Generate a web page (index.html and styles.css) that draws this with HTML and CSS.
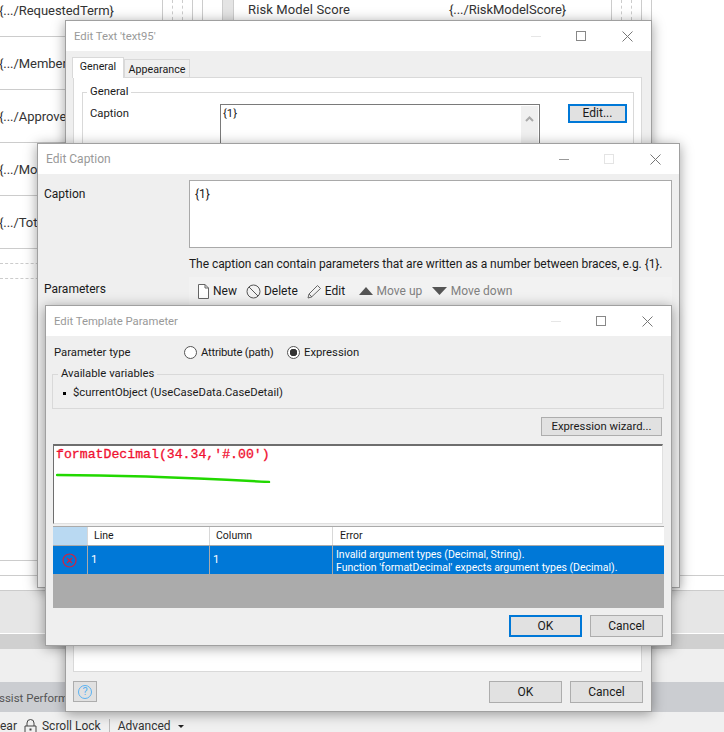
FILE: index.html
```html
<!DOCTYPE html>
<html lang="en">
<head>
<meta charset="utf-8">
<title>Edit Template Parameter</title>
<link rel="stylesheet" href="styles.css">
</head>
<body>
<div class="desktop">
  <div class="backdrop">
    <div class="doc-row">
      <span class="cell-a">{.../RequestedTerm}</span>
      <div class="ticks"><i></i><i class="dash"></i><i class="dash"></i><i></i><i></i><b></b></div>
      <span class="cell-b">Risk Model Score</span>
      <span class="cell-c">{.../RiskModelScore}</span>
      <div class="ticks right"><i></i><i class="dash"></i><i class="dash"></i><i></i><i></i></div>
    </div>
    <div class="doc-row"><span class="cell-a">{.../Member</span></div>
    <div class="doc-row"><span class="cell-a">{.../Approve</span></div>
    <div class="doc-row"><span class="cell-a">{.../Mo</span></div>
    <div class="doc-row"><span class="cell-a">{.../Tota</span></div>
    <div class="dash-row"></div>
    <div class="dash-row"></div>
    <div class="doc-spacer"></div>
    <div class="thin-row"></div>
    <div class="thin-gap"></div>
    <div class="pane-grey"></div>
    <div class="pane-band"></div>
    <div class="pane-white"></div>
    <div class="tab-band">ssist Perform</div>
    <div class="status">
      <span>ear</span>
      <svg class="lock" width="13" height="15" viewBox="0 0 13 15"><path d="M3 7V4a3.500 3.500 0 0 1 7 0v3M1 7h11v7.500H1z" fill="none" stroke="#444"/><rect x="5.500" y="9.500" width="2" height="2" fill="#444"/></svg>
      <span>Scroll Lock</span>
      <span class="status-sep"></span>
      <span>Advanced</span>
      <span class="caret"></span>
    </div>
  </div>

  <section class="window win-text">
    <header class="titlebar">
      <span class="title">Edit Text 'text95'</span>
      <div class="controls">
        <span class="ctl-min faint"></span><span class="ctl-max"></span>
        <svg class="ctl-x" width="11" height="11" viewBox="0 0 11 11"><path d="M.5.5l10 10M10.500.5l-10 10" stroke="#777" fill="none"/></svg>
      </div>
    </header>
    <div class="tabs">
      <span class="tab active">General</span>
      <span class="tab">Appearance</span>
    </div>
    <div class="tab-panel">
      <fieldset class="group general-group">
        <legend>General</legend>
        <div class="caption-row">
          <span class="caption-label">Caption</span>
          <div class="caption-box"><span>{1}</span><div class="scroll"><svg width="9" height="6" viewBox="0 0 9 6"><path d="M1 5l3.500-3.500L8 5" fill="none" stroke="#aaa" stroke-width="2"/></svg></div></div>
          <button class="btn focus edit-btn">Edit...</button>
        </div>
      </fieldset>
      <div class="panel-white"></div>
    </div>
    <footer class="win-text-foot">
      <span class="help"><span class="help-q">?</span></span>
      <span class="grow"></span>
      <button class="btn foot-btn">OK</button>
      <button class="btn foot-btn">Cancel</button>
    </footer>
  </section>

  <section class="window win-caption">
    <header class="titlebar">
      <span class="title">Edit Caption</span>
      <div class="controls">
        <span class="ctl-min dark"></span><span class="ctl-max faint"></span>
        <svg class="ctl-x" width="11" height="11" viewBox="0 0 11 11"><path d="M.5.5l10 10M10.500.5l-10 10" stroke="#777" fill="none"/></svg>
      </div>
    </header>
    <div class="caption-form">
      <div class="form-row">
        <span class="form-label">Caption</span>
        <div class="form-main">
          <div class="caption-area">{1}</div>
          <p class="hint">The caption can contain parameters that are written as a number between braces, e.g. {1}.</p>
        </div>
      </div>
      <div class="form-row params">
        <span class="form-label">Parameters</span>
        <div class="toolbar">
          <span class="tool"><svg width="13" height="15" viewBox="0 0 13 15"><path d="M1.500.5h6.500l3.500 3.500v10.500h-10zM8 .5v3.500h3.500" fill="#fff" stroke="#666"/></svg>New</span>
          <span class="tool"><svg width="15" height="15" viewBox="0 0 15 15"><circle cx="7.500" cy="7.500" r="6.500" fill="none" stroke="#555"/><path d="M3 3l9 9" stroke="#555"/></svg>Delete</span>
          <span class="tool tool-last"><svg width="15" height="15" viewBox="0 0 15 15"><path d="M1 14l1-4 8.500-8.500 3 3L4.500 13zM2 10l3 3" fill="none" stroke="#666"/></svg>Edit</span>
          <span class="tool off"><svg width="14" height="8" viewBox="0 0 14 8"><path d="M7 0l7 8H0z" fill="#555"/></svg>Move up</span>
          <span class="tool off"><svg width="15" height="8" viewBox="0 0 15 8"><path d="M0 0h15l-7.500 8z" fill="#555"/></svg>Move down</span>
        </div>
      </div>
    </div>
    <footer class="caption-foot"><span class="hidden-btn"></span></footer>
  </section>

  <section class="window win-param">
    <header class="titlebar">
      <span class="title">Edit Template Parameter</span>
      <div class="controls">
        <span class="ctl-min faint"></span><span class="ctl-max"></span>
        <svg class="ctl-x" width="11" height="11" viewBox="0 0 11 11"><path d="M.5.5l10 10M10.500.5l-10 10" stroke="#777" fill="none"/></svg>
      </div>
    </header>
    <div class="param-body">
      <div class="type-row">
        <span class="type-label">Parameter type</span>
        <span class="radio narrow"><span class="dot"></span>Attribute (path)</span>
        <span class="radio"><span class="dot on"></span>Expression</span>
      </div>
      <fieldset class="group vars">
        <legend>Available variables</legend>
        <div class="var-item"><span class="bullet"></span>$currentObject (UseCaseData.CaseDetail)</div>
      </fieldset>
      <div class="wizard-row"><button class="btn wizard">Expression wizard...</button></div>
      <div class="editor">
        <code>formatDecimal(34.34,'#.00')</code>
        <svg class="scribble" width="216" height="10" viewBox="0 0 216 10"><path d="M1 2c60 0 120 2 212 7" fill="none" stroke="#22d800" stroke-width="2.500" stroke-linecap="round"/></svg>
      </div>
      <div class="errors">
        <div class="err-head">
          <span class="c0 corner"></span><span class="c1">Line</span><span class="c2">Column</span><span class="c3">Error</span>
        </div>
        <div class="err-row">
          <span class="c0"><svg class="err-icon" width="15" height="15" viewBox="0 0 15 15"><circle cx="7.500" cy="7.500" r="6.500" fill="none" stroke="#d8203c" stroke-width="1.200"/><path d="M5 5l5 5M10 5l-5 5" fill="none" stroke="#d8203c" stroke-width="1.300"/></svg></span>
          <span class="c1">1</span><span class="c2">1</span>
          <span class="c3">Invalid argument types (Decimal, String).<br>Function 'formatDecimal' expects argument types (Decimal).</span>
        </div>
        <div class="err-empty"></div>
      </div>
      <div class="param-foot">
        <button class="btn focus foot-btn">OK</button>
        <button class="btn foot-btn">Cancel</button>
      </div>
    </div>
  </section>
</div>
</body>
</html>
```

FILE: styles.css
```css
* { box-sizing: border-box; }
html, body { margin: 0; padding: 0; }
body { font-family: Roboto, "Liberation Sans", sans-serif; font-size: 12px; color: #1a1a1a; background: #fff; }
.desktop { position: relative; width: 724px; height: 732px; overflow: hidden; }

/* backdrop application */
.backdrop { display: flex; flex-direction: column; height: 752px; margin-top: -16px; font-size: 13px; color: #333; }
.doc-row { position: relative; flex: 0 0 53px; width: 100px; display: flex; align-items: center; border-bottom: 1px solid #ccc; padding-top: 1px; }
.cell-a { margin-left: -1px; white-space: nowrap; letter-spacing: -.05px; }
.cell-b { position: absolute; left: 248px; top: 18px; letter-spacing: .12px; white-space: nowrap; }
.cell-c { position: absolute; left: 449px; top: 18px; letter-spacing: -.05px; white-space: nowrap; }
.ticks { position: absolute; left: 162px; top: 16px; height: 20px; display: flex; }
.ticks i { width: 10px; border-left: 1px solid #ccc; }
.ticks i.dash { border-left: 1px dashed #ccc; }
.ticks b { width: 12px; margin-left: 10px; background: #e4e4e4; border-left: 1px solid #ccc; border-right: 1px solid #ccc; }
.ticks.right { left: 611px; }
.dash-row { flex: 0 0 15px; width: 100px; border-bottom: 1px dashed #ccc; }
.doc-spacer { flex: 0 0 282px; width: 100px; border-bottom: 1px solid #ccc; }
.thin-row { flex: 0 0 15px; border-bottom: 1px solid #ccc; }
.thin-gap { flex: 0 0 14px; }
.pane-grey { flex: 0 0 44px; background: #e6e6e6; border-top: 1px solid #ccc; border-bottom: 1px solid #fff; }
.pane-band { flex: 0 0 15px; background: #d0d0d0; }
.pane-white { flex: 0 0 33px; background: #efefef; }
.tab-band { flex: 0 0 30px; background: #cbcdd1; padding-top: 3px; line-height: 27px; color: #555; white-space: nowrap; text-indent: -1px; font-size: 11.500px; }
.status { flex: 0 0 24px; background: #f0f0f0; display: flex; align-items: center; gap: 5px; white-space: nowrap; padding-top: 4px; font-size: 12px; }
.status .lock { margin-left: 2px; }
.status-sep { width: 1px; height: 15px; background: #bbb; margin: 0 3px; }
.caret { width: 0; height: 0; border: 3px solid transparent; border-top: 3px solid #222; border-bottom: 0; margin-left: 2px; }

/* dialog windows */
.window { position: absolute; background: #efefef; border: 1px solid #a0a0a0; box-shadow: 0 2px 12px rgba(0, 0, 0, .38); display: flex; flex-direction: column; }
.win-text { left: 65px; top: 20px; width: 587px; height: 692px; font-size: 11.300px; }
.win-caption { left: 37px; top: 143px; width: 643px; height: 445px; }
.win-param { left: 45px; top: 305px; width: 627px; height: 341px; font-size: 11.300px; }

.titlebar { flex: 0 0 30px; background: #fff; display: flex; align-items: center; padding-left: 8px; }
.title { color: #999; flex: 1; }
.controls { display: flex; align-items: center; }
.ctl-min { width: 10px; height: 1px; background: #888; margin-right: 35px; }
.ctl-min.faint { background: #e6e6e6; }
.ctl-max { width: 10px; height: 10px; border: 1px solid #888; margin-right: 36px; }
.ctl-max.faint { border-color: #e4e4e4; }
.ctl-min.dark { background: #999; }
.ctl-x { margin-right: 18px; }

.btn { font: inherit; color: #1a1a1a; background: #e1e1e1; border: 1px solid #adadad; padding: 0; }
.btn.focus { border: 2px solid #0078d7; }

/* Edit Text window */
.tabs { flex: 0 0 26px; display: flex; align-items: flex-end; padding-left: 6px; font-size: 10.700px; }
.tab { height: 18px; padding: 0 3px; line-height: 19px; border: 1px solid #d9d9d9; border-bottom: 0; width: 66px; text-align: center; }
.tab.active { width: 52px; height: 21px; background: #fff; line-height: 18px; border-bottom: 0; position: relative; top: 1px; }
.tab-panel { flex: 0 0 595px; margin: 0 9px 0 7px; background: #fff; border: 1px solid #d9d9d9; padding: 7px 7px 0 8px; display: flex; flex-direction: column; }
.group { border: 1px solid #d9d9d9; margin: 0; }
.group legend { padding: 0 3px; line-height: 14px; }
.general-group { padding: 5px 0 0 7px; height: 300px; }
.general-group legend { margin-left: -3px; }
.caption-row { display: flex; align-items: flex-start; }
.caption-label { width: 130px; padding-top: 3px; }
.caption-box { width: 320px; height: 100px; border: 1px solid #7a7a7a; padding: 2px 2px; display: flex; justify-content: space-between; }
.scroll { width: 17px; margin: -1px -1px; background: #f0f0f0; text-align: center; padding-top: 6px; }
.edit-btn { margin-left: 28px; width: 59px; height: 19px; line-height: 13px; font-size: 12px; }
.panel-white { flex: 1; }
.win-text-foot { flex: 1; display: flex; align-items: flex-start; gap: 8px; padding: 9px 8px 0 7px; }
.grow { flex: 1; }
.foot-btn { width: 73px; height: 22px; font-size: 12px; }
.help { width: 24px; height: 21px; border: 1px solid #adadad; background: #e1e1e1; display: flex; align-items: center; justify-content: center; }
.help-q { width: 14px; height: 14px; border: 1px solid #5ab2f2; border-radius: 50%; color: #5ab2f2; font-size: 11px; line-height: 12px; text-align: center; }

/* Edit Caption window */
.caption-form { padding: 6px 7px 0 6px; flex: 1; }
.form-row { display: flex; }
.form-label { width: 145px; padding-top: 7px; }
.form-main { flex: 1; }
.caption-area { height: 68px; background: #fff; border: 1px solid #a9a9a9; padding: 6px 5px; }
.hint { margin: 8px 0 0; line-height: 16px; white-space: nowrap; letter-spacing: -.05px; }
.params { margin-top: 5px; }
.params .form-label { padding-top: 5px; }
.toolbar { flex: 1; display: flex; align-items: center; height: 28px; background: #f2f2f2; padding-left: 8px; }
.tool { display: inline-flex; align-items: center; gap: 3px; margin-right: 9px; }
.tool svg { flex: none; }
.tool-last { margin-right: 14px; }
.tool.off { color: #808080; gap: 3.500px; margin-right: 10px; }
.caption-foot { display: flex; justify-content: flex-end; padding: 0 7px 7px 0; }
.hidden-btn { width: 73px; height: 24px; background: #e1e1e1; border: 1px solid #adadad; }

/* Edit Template Parameter window */
.param-body { padding: 0 7px; flex: 1; display: flex; flex-direction: column; }
.type-row { height: 16px; margin-top: 8px; display: flex; align-items: center; padding-left: 1px; }
.type-label { width: 130px; }
.radio { display: inline-flex; align-items: center; gap: 4px; width: 103px; }
.radio.narrow { letter-spacing: -.25px; }
.dot { width: 13px; height: 13px; border: 1px solid #555; border-radius: 50%; background: #fff; }
.dot.on { background: radial-gradient(circle, #333 0 3.500px, #fff 4px); }
.vars { height: 42px; margin-top: 7px; padding: 0 0 0 10px; width: 612px; margin-left: -1px; }
.vars legend { margin-left: -5px; }
.var-item { display: flex; align-items: center; gap: 7px; line-height: 20px; margin-top: 2px; }
.bullet { width: 3px; height: 3px; background: #000; }
.wizard-row { display: flex; justify-content: flex-end; margin-top: 8px; padding-right: 2px; }
.wizard { width: 121px; height: 19px; line-height: 15px; }
.editor { height: 80px; margin-top: 8px; background: #fff; border: 1px solid #e0e0e0; border-top: 2px solid #6e6e6e; border-left-color: #6e6e6e; padding: 1px 2px 0; width: 610px; }
.editor code { display: block; font-family: "Liberation Mono", "Courier New", monospace; font-size: 13.200px; line-height: 16px; color: #f01030; -webkit-text-stroke: .3px #f01030; }
.scribble { display: block; margin-top: 10px; }
.errors { margin-top: 2px; height: 82px; width: 611px; background: #ababab; border-top: 1px solid #aaa; }
.err-head { height: 18px; background: #fff; display: flex; line-height: 18px; font-size: 10.500px; }
.err-row { height: 29px; background: #0078d7; color: #fff; display: flex; border-top: 1px solid #aaa; }
.c0 { width: 34px; flex: none; display: flex; align-items: center; justify-content: center; padding-right: 2px; }
.corner { background: #b9d9f2; }
.c1 { width: 122px; flex: none; padding-left: 6px; border-left: 1px solid #d8d8d8; }
.c2 { width: 123px; flex: none; padding-left: 6px; border-left: 1px solid #d8d8d8; }
.c3 { flex: 1; padding-left: 7px; border-left: 1px solid #d8d8d8; white-space: nowrap; }
.err-row .c1, .err-row .c2 { line-height: 28px; border-left-color: #aaa; padding-left: 3px; }
.err-row .c3 { line-height: 13px; padding-top: 2px; padding-left: 3px; border-left-color: #aaa; font-size: 10.500px; }
.err-empty { height: 34px; }
.param-foot { display: flex; justify-content: flex-end; gap: 8px; margin-top: 7px; padding-right: 1px; }
```
